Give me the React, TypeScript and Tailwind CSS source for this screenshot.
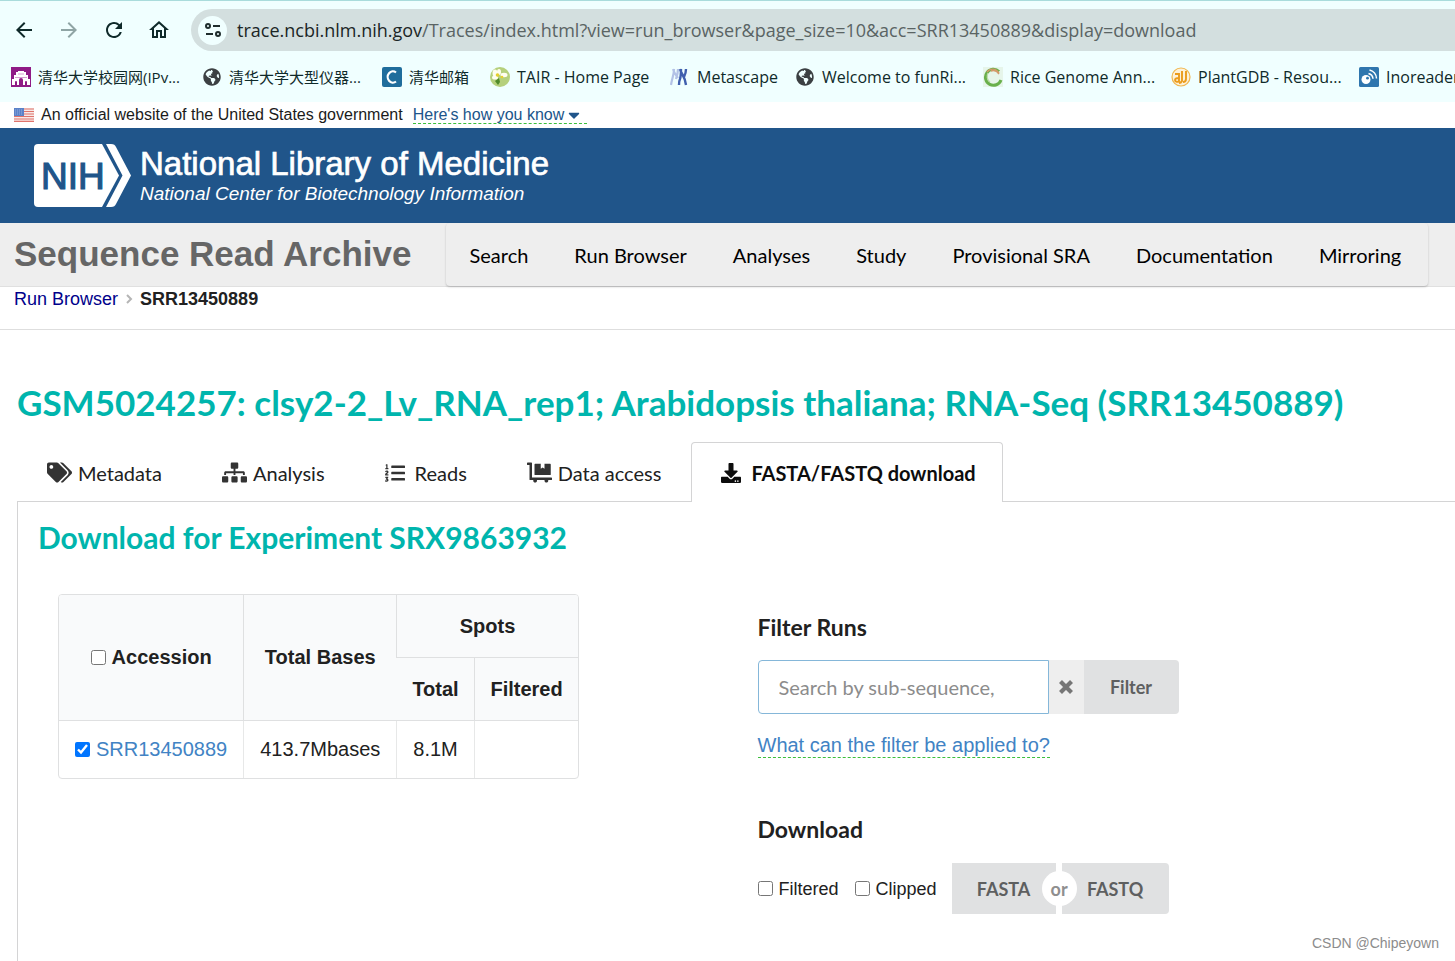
import { useState } from 'react'
import type { ReactNode } from 'react'
import {
  FaCaretDown,
  FaDollyFlatbed,
  FaDownload,
  FaGlobeAmericas,
  FaListOl,
  FaSitemap,
  FaTags,
} from 'react-icons/fa'
import {
  MdArrowBack,
  MdArrowForward,
  MdOutlineHome,
  MdRefresh,
} from 'react-icons/md'

function GateIcon() {
  return (
    <svg viewBox="0 0 20 20" className="size-5">
      <rect width="20" height="20" fill="#8f1b86" />
      <path
        d="M1 18v-6h2V8h2V5h2V4h6v1h2v3h2v4h2v6h-3v-3a1 1 0 0 0-2 0v3h-2v-5a2 2 0 0 0-4 0v5H6v-3a1 1 0 0 0-2 0v3z"
        fill="#fff"
      />
      <path d="M4 10.500h12M7 7h6" stroke="#c98ac4" strokeWidth="0.8" />
    </svg>
  )
}

function MailIcon() {
  return (
    <svg viewBox="0 0 20 20" className="size-5">
      <rect width="20" height="20" rx="2" fill="#1f6d9c" />
      <path
        d="M14 5.500A5.200 5.600 0 1 0 14 14.500"
        fill="none"
        stroke="#fff"
        strokeWidth="2.200"
      />
    </svg>
  )
}

function TairIcon() {
  return (
    <svg viewBox="0 0 20 20" className="size-5">
      <circle cx="10" cy="10" r="10" fill="#b5d07c" />
      <path d="M9 11l1 4-2 3-3-4z" fill="#4f8a2a" />
      <g fill="#fffef0">
        <ellipse cx="5" cy="6" rx="2.500" ry="3.500" />
        <ellipse cx="9" cy="5" rx="2" ry="3" />
        <ellipse cx="14" cy="8" rx="3.500" ry="2.200" />
        <ellipse cx="5" cy="10.500" rx="3" ry="2" />
      </g>
      <circle cx="7.500" cy="8" r="1.800" fill="#e6cf2e" />
      <circle cx="12" cy="10" r="1.300" fill="#e6cf2e" />
    </svg>
  )
}

function MetascapeIcon() {
  return (
    <svg viewBox="0 0 20 20" className="size-5" fill="none">
      <path d="M4 2c0 6-2 9-3 16M3 2c1 4 3 6 5 9M8 2c0 4-1 7-2 10" stroke="#b3c2e6" strokeWidth="2.200" />
      <path d="M11 2c0 5 0 7-1 10-1 2-1 3-1 6M10 2c1 5 5 7 6 16M16 2c0 4-1 6-2 8" stroke="#3f5fae" strokeWidth="2.400" />
    </svg>
  )
}

function RiceIcon() {
  return (
    <svg viewBox="0 0 20 20" className="size-5" fill="none">
      <rect width="20" height="20" fill="#e6f5ea" />
      <path d="M16 4.500A8 8 0 1 0 18 13" stroke="#69b04c" strokeWidth="3" />
      <path d="M4 5c3-4 9-4 12 1M8 4c3-1 6 0 8 3" stroke="#d39a6a" strokeWidth="1.400" />
      <path d="M5 6a7 7 0 0 0 2 9" stroke="#b9dba6" strokeWidth="1.200" />
    </svg>
  )
}

function PlantIcon() {
  return (
    <svg viewBox="0 0 20 20" className="size-5" fill="none">
      <circle cx="10" cy="10" r="9" fill="#fdf1d8" stroke="#f0b64e" strokeWidth="1.200" />
      <path
        d="M4 7h4v7c-2 2-4 0-4-1 0-2 2-2 4-2M11 4v10c-1 2-2 2-3 2M15 4v8c0 2-1 3-3 3"
        stroke="#eb9c1c"
        strokeWidth="1.900"
      />
    </svg>
  )
}

function InoreaderIcon() {
  return (
    <svg viewBox="0 0 20 20" className="size-5" fill="none">
      <rect width="20" height="20" rx="1.500" fill="#2f76ae" />
      <circle cx="7" cy="12.500" r="4.500" fill="#fff" />
      <circle cx="8.500" cy="11.200" r="1.400" fill="#2f76ae" />
      <path d="M9.500 6.500a6 6 0 0 1 4.500 5.300M10.500 3a9 9 0 0 1 7 8.500" stroke="#fff" strokeWidth="1.500" />
    </svg>
  )
}

function Globe() {
  return <FaGlobeAmericas className="size-[18px] text-[#3c4043]" />
}

function FlagIcon() {
  return (
    <svg viewBox="0 0 20 14" className="h-[14px] w-5">
      <rect width="20" height="14" fill="#f7e9e7" />
      <path d="M0 1h20M0 3.500h20M0 6h20M0 8.500h20M0 11h20M0 13.300h20" stroke="#e0746c" strokeWidth="1.200" />
      <rect width="10" height="8" fill="#5b82c8" />
      <path d="M1 2h8M1 4h8M1 6h8" stroke="#a9c2ea" strokeWidth="0.700" strokeDasharray="1 1" />
    </svg>
  )
}

function NihLogo() {
  return (
    <svg
      viewBox="0 0 530 63"
      className="h-[63px] w-[530px] shrink-0 font-['Liberation_Sans',Arial,sans-serif]"
      role="img"
      aria-label="National Library of Medicine"
    >
      <path d="M4 0H68L85 31.500L68 63H4a4 4 0 0 1-4-4V4a4 4 0 0 1 4-4z" fill="#fff" />
      <path d="M72 0h5c3 0 4 1 5 3l15 28.500L82 60c-1 2-2 3-5 3h-5l16.500-31.500z" fill="#fff" />
      <text x="7" y="45" fontSize="37" fill="#20558a" stroke="#20558a" strokeWidth="1.200">
        NIH
      </text>
      <text x="106" y="31" fontSize="33" fill="#fff" stroke="#fff" strokeWidth="0.700">
        National Library of Medicine
      </text>
      <text x="106" y="56" fontSize="19" fontStyle="italic" fill="#fff">
        National Center for Biotechnology Information
      </text>
    </svg>
  )
}

const bookmarks: { label: string; icon: ReactNode; className: string }[] = [
  { label: '清华大学校园网(IPv...', icon: <GateIcon />, className: 'w-[171px] text-[15px]' },
  { label: '清华大学大型仪器...', icon: <Globe />, className: 'w-40 text-[15px]' },
  { label: '清华邮箱', icon: <MailIcon />, className: 'w-[88px] text-[15px]' },
  { label: 'TAIR - Home Page', icon: <TairIcon />, className: 'w-40 text-base' },
  { label: 'Metascape', icon: <MetascapeIcon />, className: 'w-[105px] text-base' },
  { label: 'Welcome to funRi...', icon: <Globe />, className: 'w-[168px] text-base' },
  { label: 'Rice Genome Ann...', icon: <RiceIcon />, className: 'w-[168px] text-base' },
  { label: 'PlantGDB - Resou...', icon: <PlantIcon />, className: 'w-[168px] text-base' },
  { label: 'Inoreader', icon: <InoreaderIcon />, className: 'w-[168px] text-base' },
]

const navLinks = [
  'Search',
  'Run Browser',
  'Analyses',
  'Study',
  'Provisional SRA',
  'Documentation',
  'Mirroring',
]

const tabs = [
  { label: 'Metadata', icon: <FaTags className="size-[25px] text-[#333]" /> },
  { label: 'Analysis', icon: <FaSitemap className="size-[25px] text-[#333]" /> },
  { label: 'Reads', icon: <FaListOl className="mr-1 size-5 text-[#333]" /> },
  { label: 'Data access', icon: <FaDollyFlatbed className="size-[25px] text-[#333]" /> },
  { label: 'FASTA/FASTQ download', icon: <FaDownload className="mr-1 size-5" /> },
]

function BrowserBar() {
  return (
    <div className="border-t border-[#a9dcdc] bg-[#f0ffff] font-['Open_Sans','Noto_Sans_CJK_SC',sans-serif]">
      <div className="flex h-[58px] items-center pl-3 text-[#0f2a2a]">
        <div className="flex gap-[21px]">
          <button aria-label="Back"><MdArrowBack className="size-6" /></button>
          <button aria-label="Forward" className="text-[#8fa5a5]"><MdArrowForward className="size-6" /></button>
          <button aria-label="Reload"><MdRefresh className="size-6" /></button>
          <button aria-label="Home"><MdOutlineHome className="size-6" /></button>
        </div>
        <div className="ml-5 flex h-[42px] flex-1 items-center rounded-l-full bg-[#d3dfdf] pl-[7px]">
          <button aria-label="Site information" className="flex size-[29px] items-center justify-center rounded-full bg-[#f0ffff]">
            <svg viewBox="0 0 16 14" className="h-[14px] w-4" fill="none" stroke="#1f2d2d" strokeWidth="2">
              <circle cx="3" cy="3" r="2" />
              <path d="M8 3h7M1 11h7" />
              <circle cx="13" cy="11" r="2" />
            </svg>
          </button>
          <p className="ml-[10px] text-lg whitespace-nowrap text-[#5a6464]">
            <span className="text-[#1b2626]">trace.ncbi.nlm.nih.gov</span>
            /Traces/index.html?view=run_browser&amp;page_size=10&amp;acc=SRR13450889&amp;display=download
          </p>
        </div>
      </div>
      <nav className="flex h-[43px] gap-5 overflow-hidden pb-[7px] pl-[11px] text-[#0f2a2a]">
        {bookmarks.map((item) => (
          <a
            key={item.label}
            href="#"
            className={`flex shrink-0 items-center gap-[7px] whitespace-nowrap ${item.className}`}
          >
            <span className="flex size-5 shrink-0 items-center justify-center">{item.icon}</span>
            {item.label}
          </a>
        ))}
      </nav>
    </div>
  )
}

function SiteHeader() {
  return (
    <header>
      <div className="flex h-[26px] items-center pl-[14px] text-base text-[#1b1b1b]">
        <FlagIcon />
        <p className="ml-[7px]">An official website of the United States government</p>
        <button className="ml-[10px] flex h-[18px] items-center gap-px border-b border-dashed border-[#3bbf3b] pr-1 text-[#20558a]">
          Here's how you know
          <FaCaretDown className="size-[18px]" />
        </button>
      </div>
      <div className="flex h-[95px] items-center bg-[#20558a] pl-[34px]">
        <NihLogo />
      </div>
      <div className="flex h-16 items-stretch border-b border-[#e0e0e0] bg-[#eeeeee] pl-[14px]">
        <h1 className="flex items-center text-[35px] font-bold whitespace-nowrap text-[#666]">Sequence Read Archive</h1>
        <nav className="ml-[35px] flex items-center rounded pr-1 font-[Lato,sans-serif] text-xl text-black shadow-[0_1px_2px_rgba(34,36,38,0.25)]">
          {navLinks.map((label) => (
            <a key={label} href="#" className="px-[23px] whitespace-nowrap">
              {label}
            </a>
          ))}
        </nav>
      </div>
    </header>
  )
}

function RunsTable() {
  const [checked, setChecked] = useState(true)

  return (
    <div className="inline-block overflow-hidden rounded border border-[#dfe0e1]">
      <table className="text-xl text-[#212121]">
        <thead className="bg-[#f9fafb]">
          <tr>
            <th rowSpan={2} className="w-[184px] border-r border-b border-[#dfe0e1]">
              <label className="inline-flex items-center gap-[6px]">
                <input type="checkbox" className="size-[15px]" />
                Accession
              </label>
            </th>
            <th rowSpan={2} className="w-[153px] border-b border-[#dfe0e1]">Total Bases</th>
            <th colSpan={2} className="h-[62px] border-b border-l border-[#dfe0e1]">Spots</th>
          </tr>
          <tr>
            <th className="h-[63px] w-[78px] border-b border-[#dfe0e1]">Total</th>
            <th className="w-[103px] border-b border-l border-[#dfe0e1]">Filtered</th>
          </tr>
        </thead>
        <tbody>
          <tr>
            <td className="h-[58px] border-r border-[#e7e8e8] px-4">
              <div className="flex items-center gap-[6px]">
                <input
                  type="checkbox"
                  aria-label="SRR13450889"
                  checked={checked}
                  onChange={(e) => setChecked(e.target.checked)}
                  className="size-[15px]"
                />
                <a href="#" className="text-[#4183c4]">SRR13450889</a>
              </div>
            </td>
            <td className="px-4">413.7Mbases</td>
            <td className="border-l border-[#e7e8e8] px-4">8.1M</td>
            <td className="border-l border-[#e7e8e8]"></td>
          </tr>
        </tbody>
      </table>
    </div>
  )
}

function FilterForm() {
  return (
    <div>
      <h3 className="font-[Lato,sans-serif] text-[23px] leading-7 font-bold text-[#212121]">Filter Runs</h3>
      <div className="mt-[19px] flex h-[54px] font-[Lato,sans-serif] text-xl">
        <input
          type="text"
          aria-label="Filter runs"
          placeholder="Search by sub-sequence,"
          className="w-[291px] rounded-l border border-[#85b7d9] px-5 outline-none placeholder:text-[#8c8c8c]"
        />
        <button aria-label="Clear" className="flex w-[35px] items-center justify-center bg-[#eeeeee] text-[#767676]">
          <svg viewBox="0 0 14 14" className="size-[14px]" stroke="currentColor" strokeWidth="4.200">
            <path d="M1.500 1.500l11 11M12.500 1.500l-11 11" />
          </svg>
        </button>
        <button className="w-[95px] rounded-r bg-[#e0e1e2] text-lg font-bold text-[#5e5f60]">Filter</button>
      </div>
      <a href="#" className="mt-5 inline-block border-b border-dashed border-[#3bbf3b] text-xl leading-[23px] text-[#4183c4]">
        What can the filter be applied to?
      </a>

      <h3 className="mt-14 font-[Lato,sans-serif] text-[23px] leading-7 font-bold text-[#212121]">Download</h3>
      <div className="mt-5 flex items-center text-lg text-[#212121]">
        <label className="flex items-center gap-[6px]">
          <input type="checkbox" className="size-[15px]" />
          Filtered
        </label>
        <label className="ml-4 flex items-center gap-[6px]">
          <input type="checkbox" className="size-[15px]" />
          Clipped
        </label>
        <div className="relative ml-[15px] flex h-[51px] gap-[6px] font-[Lato,sans-serif] font-bold text-[#5e5f60]">
          <button className="w-[104px] bg-[#e0e1e2]">FASTA</button>
          <button className="w-[107px] rounded-r bg-[#e0e1e2]">FASTQ</button>
          <span className="absolute top-2 left-[90px] flex size-[35px] items-center justify-center rounded-full bg-white text-[#8f8f8f]">
            or
          </span>
        </div>
      </div>
    </div>
  )
}

export default function App() {
  const [active, setActive] = useState('FASTA/FASTQ download')

  return (
    <div className="relative flex min-h-screen flex-col overflow-x-hidden bg-white font-['Liberation_Sans',Arial,sans-serif]">
      <BrowserBar />
      <SiteHeader />

      <nav className="flex h-[43px] items-start gap-[7px] border-b border-[#dedede] pl-[14px] text-lg leading-6 text-[#212121]">
        <a href="#" className="text-[#00008b]">Run Browser</a>
        <span className="flex h-6 items-center">
          <svg viewBox="0 0 8 10" className="h-[10px] w-2" fill="none" stroke="#b5b5b5" strokeWidth="2">
            <path d="M2 1l4 4-4 4" />
          </svg>
        </span>
        <span className="font-bold">SRR13450889</span>
      </nav>

      <main className="flex flex-1 flex-col pt-[49px] pl-[17px]">
        <h2 className="font-[Lato,sans-serif] text-[35px] leading-[46px] font-bold whitespace-nowrap text-[#00b5ad]">
          GSM5024257: clsy2-2_Lv_RNA_rep1; Arabidopsis thaliana; RNA-Seq (SRR13450889)
        </h2>

        <div role="tablist" className="mt-[17px] flex h-[60px] border-b border-[#d4d4d5] font-[Lato,sans-serif] text-xl">
          {tabs.map((tab) => (
            <button
              key={tab.label}
              role="tab"
              aria-selected={tab.label === active}
              onClick={() => setActive(tab.label)}
              className={
                tab.label === active
                  ? '-mb-px flex items-center gap-[6px] rounded-t border border-b-0 border-[#d4d4d5] bg-white pr-[26px] pl-[29px] pt-px font-bold whitespace-nowrap text-[#0d0d0d]'
                  : 'flex items-center gap-[6px] px-[30px] pt-[2px] whitespace-nowrap text-[#212121]'
              }
            >
              {tab.icon}
              {tab.label}
            </button>
          ))}
        </div>

        <section className="flex-1 border-l border-[#d4d4d5] pt-4 pl-5">
          <h2 className="font-[Lato,sans-serif] text-[30px] leading-[38px] font-bold text-[#00b5ad]">
            Download for Experiment SRX9863932
          </h2>
          <div className="mt-[38px] grid grid-cols-2">
            <div className="pl-5">
              <RunsTable />
            </div>
            <div className="pt-[19px] pl-[11px]">
              <FilterForm />
            </div>
          </div>
        </section>
      </main>

      <p className="absolute right-4 bottom-2 text-sm text-[#8c8c8c]">CSDN @Chipeyown</p>
    </div>
  )
}
